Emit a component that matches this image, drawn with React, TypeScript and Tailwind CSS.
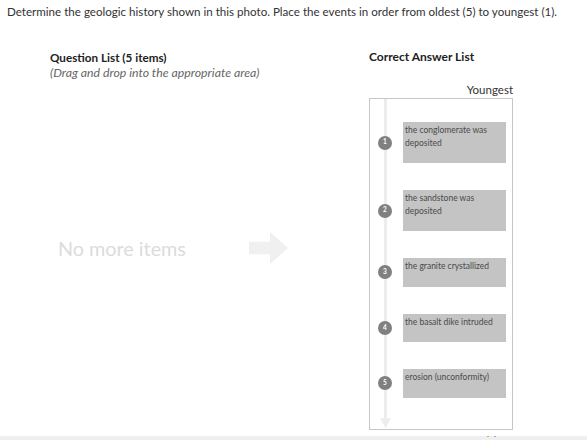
import React from "react";

const items = [
  "the conglomerate was deposited",
  "the sandstone was deposited",
  "the granite crystallized",
  "the basalt dike intruded",
  "erosion (unconformity)",
];

export default function App() {
  return (
    <div
      className="w-[587px] h-[440px] bg-white overflow-hidden flex flex-col"
      style={{ fontFamily: "Lato, 'Open Sans', sans-serif" }}
    >
      <p className="pl-[7px] pt-[5px] text-[11.6px] leading-[14px] text-[#333]">
        Determine the geologic history shown in this photo. Place the events in order from oldest (5) to youngest (1).
      </p>

      <div className="flex mt-[31px]">
        {/* Left column */}
        <div className="w-[369px] pl-[50px] flex flex-col">
          <div className="text-[11.7px] leading-[14px] font-bold text-[#222]">Question List (5 items)</div>
          <div className="mt-[2px] text-[12.3px] leading-[14px] italic text-[#666]">
            (Drag and drop into the appropriate area)
          </div>
          <div className="mt-[152px] flex items-center">
            <div className="w-[199px] pl-[8px] text-[19.8px] leading-[24px] text-[#dcdcdc]">No more items</div>
            <svg width="39" height="32" viewBox="0 0 39 32">
              <path d="M0 9.7 H21 V0 L39 16 L21 32 V22.3 H0 Z" fill="#f0f0f0" />
            </svg>
          </div>
        </div>

        {/* Right column */}
        <div className="w-[144px] flex flex-col">
          <div className="text-[12px] leading-[14px] font-bold text-[#222]">Correct Answer List</div>
          <div className="mt-[19px] text-right text-[11.5px] leading-[14px] text-[#333]">Youngest</div>
          <div className="mt-[1px] relative h-[332px] border border-[#c6c6c6]">
            <div className="absolute left-[14px] top-0 bottom-[11px] w-[3px] bg-[#ededed]" />
            <svg className="absolute left-[10px] bottom-[1px]" width="11" height="10" viewBox="0 0 11 10">
              <path d="M0 0 H11 L5.5 10 Z" fill="#ededed" />
            </svg>
            <div className="relative flex flex-col gap-[27px] pt-[23px]">
              {items.map((t, i) => (
                <div key={i} className="flex items-center">
                  <div className="w-[33px] pl-[8px]">
                    <div className="w-[14px] h-[14px] rounded-full bg-[#808080] text-white text-[6.5px] font-bold flex items-center justify-center leading-none">
                      {i + 1}
                    </div>
                  </div>
                  <div className="w-[103px] bg-[#c4c4c4] pt-[2px] pb-[14px] px-[2px] text-[8.5px] leading-[12.5px] text-[#4a4a4a]">
                    <div className={i < 2 ? "w-[84px]" : ""}>{t}</div>
                  </div>
                </div>
              ))}
            </div>
          </div>
        </div>
      </div>

      <div className="relative mt-[6px] h-[10px] bg-[#efefef]">
        <span className="absolute left-[487px] top-0 w-[2px] h-[1px] bg-[#e0a060]" />
        <span className="absolute left-[494px] top-0 w-[2px] h-[1px] bg-[#80b0e0]" />
      </div>
    </div>
  );
}
